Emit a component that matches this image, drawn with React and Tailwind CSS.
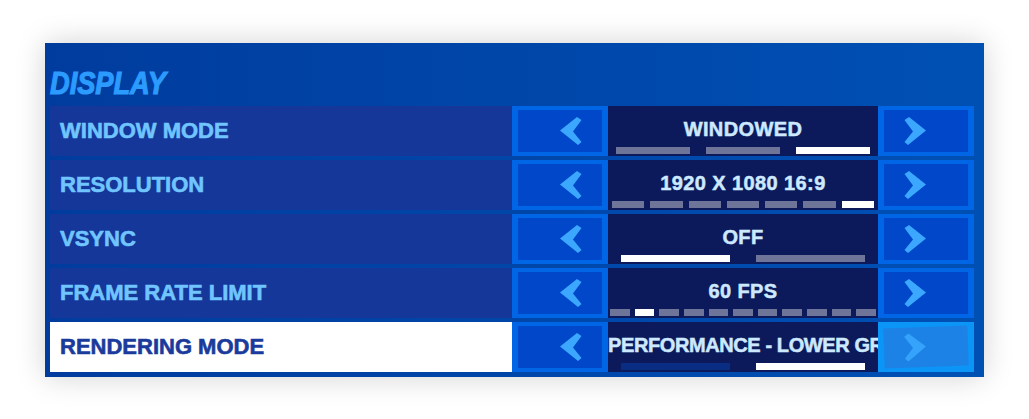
import React from "react";

const rows = [
    { label: "WINDOW MODE", value: "WINDOWED", bars: ["g", "g", "w"], pad: "px-[8px] gap-[16px]" },
    { label: "RESOLUTION", value: "1920 X 1080 16:9", bars: ["g", "g", "g", "g", "g", "g", "w"], pad: "px-[4px] gap-[6px]" },
    { label: "VSYNC", value: "OFF", bars: ["w", "g"], pad: "px-[13px] gap-[26px]" },
    { label: "FRAME RATE LIMIT", value: "60 FPS", bars: ["g", "w", "g", "g", "g", "g", "g", "g", "g", "g", "g"], pad: "px-[2px] gap-[5px]" },
    { label: "RENDERING MODE", value: "PERFORMANCE - LOWER GRAPHICAL FIDELITY", bars: ["d", "w"], pad: "px-[13px] gap-[26px]", active: true },
];

const barColor = {
    g: "bg-[#6f7499]",
    w: "bg-white",
    d: "bg-[#0a2d84]",
};

const LeftArrow = ({ className }) => (
    <svg width="22" height="28" viewBox="0 0 22 28" className={className}>
        <path d="M0 13.5 L17 0 L21.5 3 L13 14.5 L21.5 25 L18 28 Z" fill="currentColor" strokeLinejoin="round" />
    </svg>
);

const RightArrow = ({ className }) => (
    <svg width="22" height="28" viewBox="0 0 22 28" className={className}>
        <path d="M22 13.5 L5 0 L0.5 3 L9 14.5 L0.5 25 L4 28 Z" fill="currentColor" strokeLinejoin="round" />
    </svg>
);

const Row = ({ row }) => {
    return (
        <div className="flex h-[50px] mb-[4px] last:mb-0">
            <div className={"w-[462px] flex items-center pl-[10px] " + (row.active ? "bg-white" : "bg-[#15379a]")}>
                <span className={"text-[22px] font-bold leading-none [-webkit-text-stroke:0.6px_currentColor] " + (row.active ? "text-[#1a3b9c]" : "text-[#70c5ff]")}>
                    {row.label}
                </span>
            </div>

            <div className="w-[96px] border-x-[6px] border-y-4 border-[#0066e6] bg-[#0047c9] flex items-center justify-center pl-[22px]">
                <LeftArrow className="text-[#3ba7ff]" />
            </div>

            <div className="w-[270px] bg-[#0c1a5c] flex flex-col justify-between pt-[13px] pb-[2px] overflow-hidden">
                {row.active ? (
                    <div className="text-[20px] font-bold leading-none text-[#cde9ff] whitespace-nowrap tracking-[-0.4px] [-webkit-text-stroke:0.5px_currentColor]">{row.value}</div>
                ) : (
                    <div className="text-[20px] font-bold leading-none text-[#cde9ff] text-center tracking-[0.4px] whitespace-nowrap [-webkit-text-stroke:0.5px_currentColor]">{row.value}</div>
                )}
                <div className={"flex h-[7px] " + row.pad}>
                    {row.bars.map((b, i) => (
                        <div key={i} className={"flex-1 " + barColor[b]}></div>
                    ))}
                </div>
            </div>

            {row.active ? (
                <div className="w-[96px] bg-[#0b96f7] flex items-center justify-center">
                    <div className="w-[84px] h-[40px] bg-[#1c82e6] -rotate-2 flex items-center justify-center pr-[22px]">
                        <RightArrow className="text-[#35a2fb]" />
                    </div>
                </div>
            ) : (
                <div className="w-[96px] border-x-[6px] border-y-4 border-[#0066e6] bg-[#0047c9] flex items-center justify-center pr-[22px]">
                    <RightArrow className="text-[#3ba7ff]" />
                </div>
            )}
        </div>
    );
};

const App = () => {
    return (
        <div className="w-[1029px] h-[419px] bg-white pt-[43px] pl-[45px] overflow-hidden" style={{ fontFamily: '"Liberation Sans", Arial, sans-serif' }}>
            <div className="w-[939px] h-[334px] bg-gradient-to-r from-[#003c9e] to-[#0050b4] shadow-[0_0_28px_rgba(0,0,0,0.18)] pl-[5px] pr-[10px]">
                <div className="h-[63px] pt-[24px]">
                    <span className="inline-block text-[32px] font-bold italic leading-none text-[#2b9bff] scale-x-[0.85] origin-left [-webkit-text-stroke:1.2px_currentColor]">
                        DISPLAY
                    </span>
                </div>
                {rows.map((row, i) => (
                    <Row key={i} row={row} />
                ))}
            </div>
        </div>
    );
};

export default App;
